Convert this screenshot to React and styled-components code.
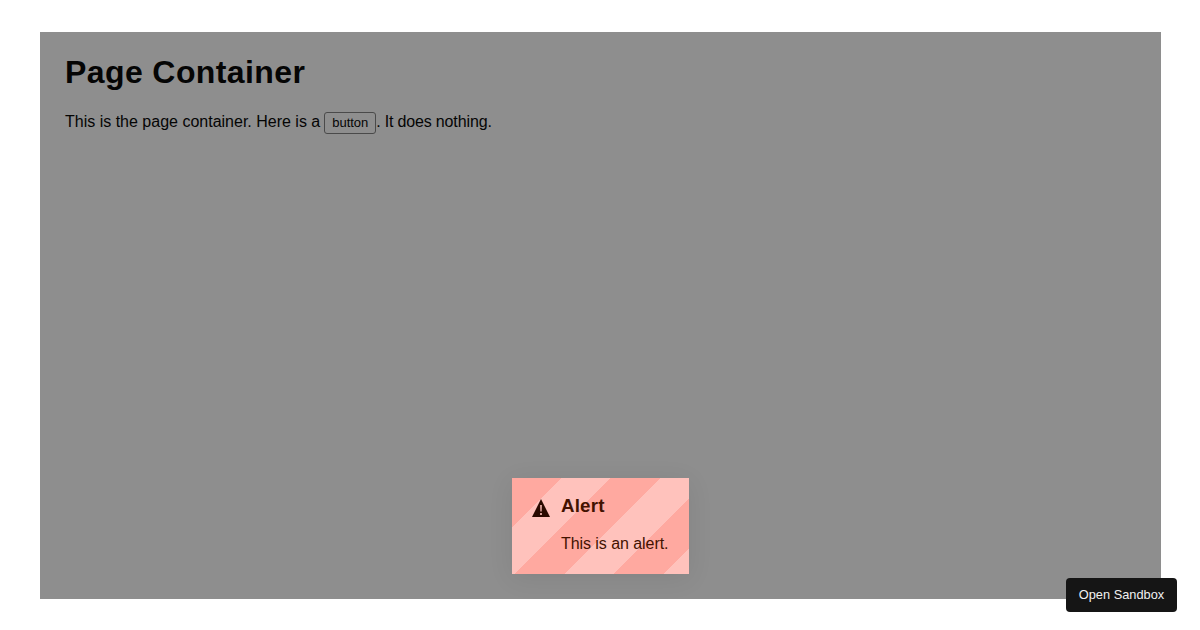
import React from "react";
import styled, { createGlobalStyle } from "styled-components";

const Global = createGlobalStyle`
  html, body { margin: 0; padding: 0; background: #fff; }
  body { font-family: "Liberation Sans", Arial, sans-serif; color: #000; }
`;

const Page = styled.div`
  position: relative;
  box-sizing: border-box;
  width: 1200px;
  height: 630px;
  padding: 32px 39px 31px 40px;
  overflow: hidden;
`;

const Container = styled.main`
  position: relative;
  box-sizing: border-box;
  height: 100%;
  padding: 21px 25px;
  background: #8e8e8e;
  color: #050505;
`;

const Title = styled.h1`
  margin: 0 0 20px;
  font-size: 32px;
  line-height: 38px;
  font-weight: 700;
  letter-spacing: 0.4px;
`;

const Text = styled.p`
  margin: 0;
  font-size: 16px;
  line-height: 22px;
`;

const Tail = styled.span`
  letter-spacing: -0.1px;
  word-spacing: -0.3px;
`;

const InlineButton = styled.button`
  box-sizing: border-box;
  width: 52px;
  height: 22px;
  margin: 0 0 0 4px;
  padding: 0;
  border: 1px solid #4a4a4a;
  border-radius: 3px;
  background: transparent;
  color: #050505;
  font: 13px "Liberation Sans", Arial, sans-serif;
  vertical-align: 0;
`;

const Alert = styled.div`
  position: absolute;
  left: 472px;
  top: 446px;
  box-sizing: border-box;
  width: 177px;
  height: 96px;
  padding: 16px 20px;
  display: grid;
  grid-template-columns: 18px auto;
  column-gap: 11px;
  align-content: start;
  color: #431200;
  background: repeating-linear-gradient(135deg, #ffa9a0 0 35px, #ffc2bc 35px 70px);
  box-shadow: 0 4px 24px rgba(0, 0, 0, 0.08);
`;

const AlertIcon = styled.svg`
  width: 18px;
  height: 18px;
  margin-top: 5px;
`;

const AlertTitle = styled.h2`
  margin: 0 0 17px;
  font-size: 18.72px;
  line-height: 24px;
  font-weight: 700;
  letter-spacing: 0.2px;
`;

const AlertBody = styled.p`
  grid-column: 2;
  margin: 0;
  font-size: 16px;
  line-height: 18px;
  letter-spacing: -0.06px;
  white-space: nowrap;
`;

const SandboxButton = styled.a`
  position: absolute;
  right: 23px;
  bottom: 18px;
  box-sizing: border-box;
  width: 111px;
  height: 34px;
  padding-bottom: 2px;
  display: flex;
  align-items: center;
  justify-content: center;
  border-radius: 4px;
  background: #151515;
  color: #f1f1f1;
  font-size: 12.8px;
`;

export default function App() {
  return (
    <>
      <Global />
      <Page>
        <Container>
          <Title>Page Container</Title>
          <Text>
            This is the page container. Here is a<InlineButton>button</InlineButton>
            <Tail>. It does nothing.</Tail>
          </Text>
          <Alert>
            <AlertIcon viewBox="0 0 18 18" aria-hidden="true">
              <path d="M9 0 L18 18 H0 Z" fill="#2a0a00" />
              <path d="M8.2 6 H9.8 L9.6 12.5 H8.4 Z M8.2 14 H9.8 V16 H8.2 Z" fill="#ffc2bc" />
            </AlertIcon>
            <AlertTitle>Alert</AlertTitle>
            <AlertBody>This is an alert.</AlertBody>
          </Alert>
        </Container>
        <SandboxButton>Open Sandbox</SandboxButton>
      </Page>
    </>
  );
}
